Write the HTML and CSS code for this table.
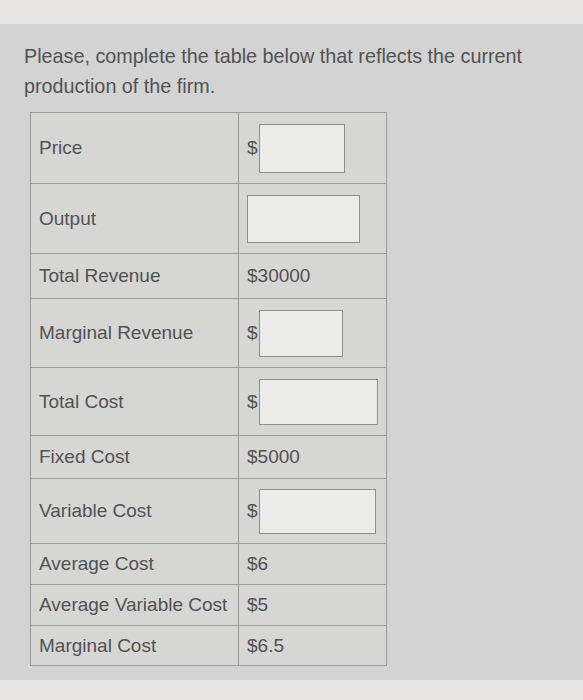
FILE: index.html
```html
<!DOCTYPE html>
<html>
<head>
<meta charset="utf-8">
<link rel="stylesheet" href="styles.css">
</head>
<body>
<div class="top-strip"></div>
<div class="panel">
  <p class="intro">Please, complete the table below that reflects the current production of the firm.</p>
  <table class="grid">
    <tr class="r1"><td class="label">Price</td><td class="val"><span class="cur">$</span><span class="box w86"></span></td></tr>
    <tr class="r2"><td class="label">Output</td><td class="val"><span class="box w113"></span></td></tr>
    <tr class="r3"><td class="label">Total Revenue</td><td class="val">$30000</td></tr>
    <tr class="r4"><td class="label">Marginal Revenue</td><td class="val"><span class="cur">$</span><span class="box w84"></span></td></tr>
    <tr class="r5"><td class="label">Total Cost</td><td class="val"><span class="cur">$</span><span class="box w119"></span></td></tr>
    <tr class="r6"><td class="label">Fixed Cost</td><td class="val">$5000</td></tr>
    <tr class="r7"><td class="label">Variable Cost</td><td class="val"><span class="cur">$</span><span class="box w117"></span></td></tr>
    <tr class="r8"><td class="label">Average Cost</td><td class="val">$6</td></tr>
    <tr class="r9"><td class="label">Average Variable Cost</td><td class="val">$5</td></tr>
    <tr class="r10"><td class="label">Marginal Cost</td><td class="val">$6.5</td></tr>
  </table>
</div>
<div class="bottom-strip"></div>
</body>
</html>
```
FILE: styles.css
```css
html, body {
  margin: 0;
  padding: 0;
  background: #e3e2df;
}
body {
  width: 583px;
  height: 700px;
  overflow: hidden;
  font-family: "Liberation Sans", Arial, sans-serif;
  color: #525252;
}
.top-strip {
  height: 24px;
  background: #e6e4e1;
}
.panel {
  background: #d3d3d3;
  height: 656px;
  padding: 17px 0 0 24px;
  box-sizing: border-box;
}
.intro {
  margin: 0;
  width: 540px;
  font-size: 19.8px;
  line-height: 30px;
}
.grid {
  margin-top: 11px;
  margin-left: 6px;
  border-collapse: collapse;
  font-size: 19px;
  background: #d6d6d5;
}
.grid td {
  border: 1px solid #9c9c9c;
  padding: 0 0 0 8px;
  vertical-align: middle;
  white-space: nowrap;
}
.grid .label { width: 199px; }
.grid .val { width: 139px; }
.cur { display: inline-block; vertical-align: middle; margin-right: 1px; }
.box {
  display: inline-block;
  vertical-align: middle;
  height: 46px;
  background: #ebebea;
  border: 1.5px solid #8e8e8e;
  box-sizing: border-box;
}
.w86 { width: 86px; height: 49px; }
.w113 { width: 113px; height: 48px; }
.w84 { width: 84px; height: 47px; }
.w119 { width: 119px; height: 46px; }
.w117 { width: 117px; height: 45px; }
.r1 td { height: 70px; }
.r2 td { height: 69px; }
.r3 td { height: 44px; }
.r4 td { height: 68px; }
.r5 td { height: 67px; }
.r6 td { height: 42px; }
.r7 td { height: 64px; }
.r8 td { height: 40px; }
.r9 td { height: 40px; }
.r10 td { height: 39px; }
.bottom-strip {
  height: 20px;
  background: #e5e4e2;
}
```
